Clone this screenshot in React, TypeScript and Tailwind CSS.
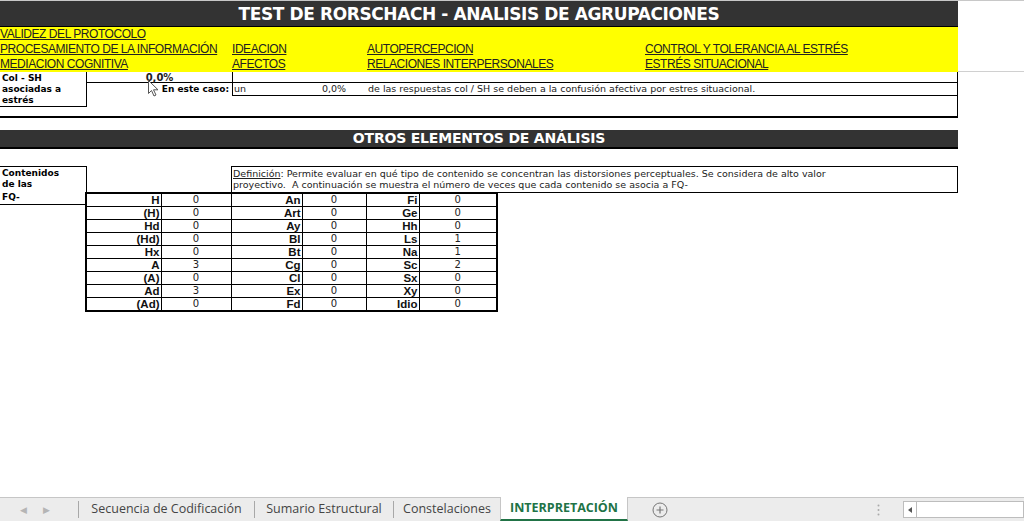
import React from "react";

const rows: string[][] = [
  ["H", "0", "An", "0", "Fi", "0"],
  ["(H)", "0", "Art", "0", "Ge", "0"],
  ["Hd", "0", "Ay", "0", "Hh", "0"],
  ["(Hd)", "0", "Bl", "0", "Ls", "1"],
  ["Hx", "0", "Bt", "0", "Na", "1"],
  ["A", "3", "Cg", "0", "Sc", "2"],
  ["(A)", "0", "Cl", "0", "Sx", "0"],
  ["Ad", "3", "Ex", "0", "Xy", "0"],
  ["(Ad)", "0", "Fd", "0", "Idio", "0"],
];

function Cursor() {
  return (
    <svg className="absolute left-[148px] top-[80px]" width="11" height="17" viewBox="0 0 11 17">
      <path d="M0.5 0.5 L0.5 13.5 L3.5 10.5 L6 16 L8 15 L5.5 9.8 L10 9.8 Z" fill="#fff" stroke="#555" strokeWidth="1" />
    </svg>
  );
}

export default function App() {
  const verd = "font-['DejaVu_Sans',Verdana,sans-serif]";
  const arial = "font-['Liberation_Sans',Arial,sans-serif]";
  const yrow = "h-[15px] flex text-[12px] leading-[15px] tracking-[-0.45px] text-[#222] font-['Liberation_Sans',Arial,sans-serif]";

  return (
    <div className="relative w-[1024px] h-[521px] bg-white overflow-hidden flex flex-col">
      <div className="h-px bg-[#c8c8c8]" />

      {/* title */}
      <div className="w-[958px] h-[26px] bg-[#333333] border-b border-black flex items-center justify-center">
        <span className={`${verd} text-white font-bold text-[17px] tracking-[-0.4px] leading-[20px]`}>
          TEST DE RORSCHACH - ANALISIS DE AGRUPACIONES
        </span>
      </div>

      {/* yellow links */}
      <div className="flex">
        <div className="w-[958px] h-[45px] bg-[#ffff00] flex flex-col">
          <div className={yrow}>
            <span className="underline">VALIDEZ DEL PROTOCOLO</span>
          </div>
          <div className={yrow}>
            <div className="w-[232px]"><span className="underline">PROCESAMIENTO DE LA INFORMACIÓN</span></div>
            <div className="w-[135px]"><span className="underline">IDEACION</span></div>
            <div className="w-[278px]"><span className="underline">AUTOPERCEPCION</span></div>
            <div><span className="underline">CONTROL Y TOLERANCIA AL ESTRÉS</span></div>
          </div>
          <div className={yrow}>
            <div className="w-[232px]"><span className="underline">MEDIACION COGNITIVA</span></div>
            <div className="w-[135px]"><span className="underline">AFECTOS</span></div>
            <div className="w-[278px]"><span className="underline">RELACIONES INTERPERSONALES</span></div>
            <div><span className="underline">ESTRÉS SITUACIONAL</span></div>
          </div>
        </div>
        <div className="flex-1 border-b border-[#d0d0d0]" />
      </div>

      {/* Col - SH */}
      <div className="w-[958px] h-[46px] border-r border-b-2 border-black flex">
        <div className={`w-[87px] h-[35px] border-r border-b border-black pl-[2px] ${verd} font-bold text-[9px] leading-[11px] pt-px`}>
          Col - SH
          <br />
          asociadas a
          <br />
          estrés
        </div>
        <div className="w-[145px] flex flex-col">
          <div className={`h-[11px] border-b border-black text-center ${verd} font-bold text-[10px] leading-[11px] text-[#222]`}>0,0%</div>
          <div className={`h-[12px] text-right pr-[3px] ${verd} font-bold text-[9px] leading-[12px]`}>En este caso:</div>
        </div>
        <div className="flex-1 flex flex-col">
          <div className="h-[11px] border-l border-b border-black" />
          <div className={`h-[13px] border-l border-b border-black flex ${verd} text-[9.5px] leading-[12px] text-[#222]`}>
            <span className="w-[89px] pl-px">un</span>
            <span className="w-[46px]">0,0%</span>
            <span>de las respuestas col / SH se deben a la confusión afectiva por estres situacional.</span>
          </div>
        </div>
      </div>

      <div className="h-[12px]" />

      {/* Otros elementos */}
      <div className="w-[958px] h-[19px] bg-[#333333] border-b-2 border-black flex items-center justify-center">
        <span className={`${verd} text-white font-bold text-[14px] tracking-[-0.2px] leading-[17px]`}>OTROS ELEMENTOS DE ANÁLISIS</span>
      </div>

      <div className="h-[17px]" />

      <div className="flex">
        <div className={`w-[87px] h-[39px] border-t border-r border-b border-black pl-[2px] ${verd} font-bold text-[9px] leading-[11px] pt-px`}>
          Contenidos
          <br />
          de las
          <br />
          <span className="leading-[15px]">FQ-</span>
        </div>
        <div className="flex flex-col">
          <div className="h-[27px] flex">
            <div className="w-[144px]" />
            <div className={`w-[727px] border border-black ${verd} text-[9.5px] leading-[11px] text-[#222] pl-px pt-px`}>
              <span className="underline">Definición</span>: Permite evaluar en qué tipo de contenido se concentran las distorsiones perceptuales. Se considera de alto valor
              <br />
              proyectivo.&nbsp; A continuación se muestra el número de veces que cada contenido se asocia a FQ-
            </div>
          </div>
          <table className="border-collapse border-2 border-black -ml-[2px] -mt-px w-[411px] table-fixed">
            <colgroup>
              <col className="w-[75px]" />
              <col className="w-[70px]" />
              <col className="w-[71px]" />
              <col className="w-[64px]" />
              <col className="w-[53px]" />
              <col className="w-[78px]" />
            </colgroup>
            <tbody>
              {rows.map((r, i) => (
                <tr key={i} className="h-[13px]">
                  {r.map((c, j) =>
                    j % 2 === 0 ? (
                      <td key={j} className={`border border-black p-0 pr-px text-right ${arial} font-bold text-[11.5px] leading-[12px] text-[#111]`}>
                        {c}
                      </td>
                    ) : (
                      <td key={j} className={`border border-black p-0 text-center ${verd} text-[10px] leading-[12px] text-[#222]`}>
                        {c}
                      </td>
                    )
                  )}
                </tr>
              ))}
            </tbody>
          </table>
        </div>
      </div>

      {/* sheet tabs */}
      <div className="mt-auto h-[24px] bg-[#ececec] border-t border-[#c6c6c6] flex items-stretch font-['Open_Sans',sans-serif] text-[12.5px] text-[#444]">
        <div className="w-[78px] flex items-center gap-[16px] pl-[20px] text-[#b5b5b5] text-[9px]">
          <span>◀</span>
          <span>▶</span>
        </div>
        <div className="w-px bg-[#a8a8a8] my-[3px]" />
        <div className="w-[175px] flex items-center justify-center">Secuencia de Codificación</div>
        <div className="w-px bg-[#a8a8a8] my-[3px]" />
        <div className="w-[138px] flex items-center justify-center">Sumario Estructural</div>
        <div className="w-px bg-[#a8a8a8] my-[3px]" />
        <div className="w-[106px] flex items-center justify-center">Constelaciones</div>
        <div className="w-[128px] -mt-px bg-white border-l border-r border-[#c6c6c6] border-b-2 border-b-[#217346] flex items-center justify-center text-[#217346] font-bold">
          INTERPRETACIÓN
        </div>
        <div className="w-[40px] flex items-center justify-end">
          <svg width="16" height="16" viewBox="0 0 16 16">
            <circle cx="8" cy="8" r="7" fill="none" stroke="#777" strokeWidth="1" />
            <path d="M8 4.5v7M4.5 8h7" stroke="#777" strokeWidth="1.2" />
          </svg>
        </div>
        <div className="flex-1 flex items-center justify-end pr-[23px]">
          <svg width="3" height="12" viewBox="0 0 3 12">
            <circle cx="1.5" cy="1.5" r="1" fill="#aaa" />
            <circle cx="1.5" cy="6" r="1" fill="#aaa" />
            <circle cx="1.5" cy="10.5" r="1" fill="#aaa" />
          </svg>
        </div>
        <div className="w-[121px] my-[3px] bg-white border border-[#bdbdbd] flex">
          <div className="w-[13px] border-r border-[#bdbdbd] flex items-center justify-center">
            <svg width="4" height="6" viewBox="0 0 4 6">
              <path d="M4 0L0 3l4 3z" fill="#555" />
            </svg>
          </div>
        </div>
      </div>

      <Cursor />
    </div>
  );
}
